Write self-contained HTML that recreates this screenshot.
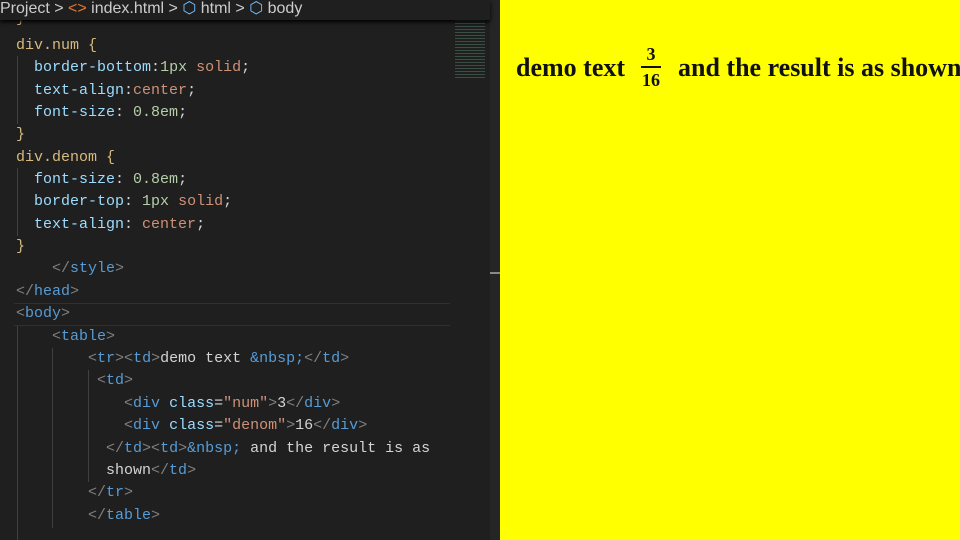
<!DOCTYPE html>
<html><head><style>
body{margin:0;width:960px;height:540px;overflow:hidden;background:#1e1e1e;position:relative;font-family:"Liberation Mono",monospace}
#ed{position:absolute;left:0;top:0;width:490px;height:540px;background:#1f1f1f}
#bc{position:absolute;left:0;top:0;width:490px;height:20px;font-family:"Liberation Sans",sans-serif;font-size:16px;color:#ccc;line-height:17px;white-space:nowrap;box-shadow:0 2px 4px #000;background:#1f1f1f;z-index:2}
.l{position:absolute;left:16px;font-size:15px;line-height:22px;white-space:pre;color:#d4d4d4}
.y{color:#d7ba7d}.b{color:#9cdcfe}.o{color:#ce9178}.g{color:#b5cea8}.t{color:#569cd6}.p{color:#808080}.w{color:#d4d4d4}.a{color:#9cdcfe}
.gd{position:absolute;width:1px;background:#404040}
#sb{position:absolute;left:490px;top:0;width:10px;height:540px;background:#252526}
#yl{position:absolute;left:500px;top:0;width:460px;height:540px;background:#ffff00}
.s{position:absolute;font-family:"Liberation Serif",serif;font-weight:bold;color:#111;white-space:nowrap}
</style></head><body>
<div id="ed">
<div id="bc">Project &gt; <span style="color:#e37933">&lt;&gt;</span> index.html &gt; <span style="color:#75beff">⬡</span> html &gt; <span style="color:#75beff">⬡</span> body</div>
<div class="gd" style="left:17px;top:56px;height:68px"></div>
<div class="gd" style="left:17px;top:168px;height:68px"></div>
<div class="gd" style="left:17px;top:325px;height:215px"></div>
<div class="gd" style="left:52px;top:348px;height:180px"></div>
<div class="gd" style="left:88px;top:370px;height:112px"></div>
<div style="position:absolute;left:14px;top:303px;width:436px;height:1px;background:#303030"></div>
<div style="position:absolute;left:14px;top:325px;width:436px;height:1px;background:#303030"></div>
<div class="l y" style="top:8px">}</div>
<div class="l y" style="top:35px">div.num {</div>
<div class="l" style="top:57px">  <span class="b">border-bottom</span>:<span class="g">1px</span> <span class="o">solid</span>;</div>
<div class="l" style="top:80px">  <span class="b">text-align</span>:<span class="o">center</span>;</div>
<div class="l" style="top:102px">  <span class="b">font-size</span>: <span class="g">0.8em</span>;</div>
<div class="l y" style="top:124px">}</div>
<div class="l y" style="top:147px">div.denom {</div>
<div class="l" style="top:169px">  <span class="b">font-size</span>: <span class="g">0.8em</span>;</div>
<div class="l" style="top:191px">  <span class="b">border-top</span>: <span class="g">1px</span> <span class="o">solid</span>;</div>
<div class="l" style="top:214px">  <span class="b">text-align</span>: <span class="o">center</span>;</div>
<div class="l y" style="top:236px">}</div>
<div class="l" style="top:258px">    <span class="p">&lt;/</span><span class="t">style</span><span class="p">&gt;</span></div>
<div class="l" style="top:281px"><span class="p">&lt;/</span><span class="t">head</span><span class="p">&gt;</span></div>
<div class="l" style="top:303px"><span class="p">&lt;</span><span class="t">body</span><span class="p">&gt;</span></div>
<div class="l" style="top:326px">    <span class="p">&lt;</span><span class="t">table</span><span class="p">&gt;</span></div>
<div class="l" style="top:348px">        <span class="p">&lt;</span><span class="t">tr</span><span class="p">&gt;&lt;</span><span class="t">td</span><span class="p">&gt;</span>demo text <span class="t">&amp;nbsp;</span><span class="p">&lt;/</span><span class="t">td</span><span class="p">&gt;</span></div>
<div class="l" style="top:370px">         <span class="p">&lt;</span><span class="t">td</span><span class="p">&gt;</span></div>
<div class="l" style="top:393px">            <span class="p">&lt;</span><span class="t">div</span> <span class="a">class</span>=<span class="o">"num"</span><span class="p">&gt;</span>3<span class="p">&lt;/</span><span class="t">div</span><span class="p">&gt;</span></div>
<div class="l" style="top:415px">            <span class="p">&lt;</span><span class="t">div</span> <span class="a">class</span>=<span class="o">"denom"</span><span class="p">&gt;</span>16<span class="p">&lt;/</span><span class="t">div</span><span class="p">&gt;</span></div>
<div class="l" style="top:438px">          <span class="p">&lt;/</span><span class="t">td</span><span class="p">&gt;&lt;</span><span class="t">td</span><span class="p">&gt;</span><span class="t">&amp;nbsp;</span> and the result is as</div>
<div class="l" style="top:460px">          shown<span class="p">&lt;/</span><span class="t">td</span><span class="p">&gt;</span></div>
<div class="l" style="top:482px">        <span class="p">&lt;/</span><span class="t">tr</span><span class="p">&gt;</span></div>
<div class="l" style="top:505px">        <span class="p">&lt;/</span><span class="t">table</span><span class="p">&gt;</span></div>
<div style="position:absolute;left:455px;top:20px;width:30px;height:60px;opacity:.35;background:repeating-linear-gradient(#6a8 0 1px,transparent 1px 3px)"></div>
</div>
<div id="sb"><div style="position:absolute;left:0;top:272px;width:10px;height:2px;background:#888"></div></div>
<div id="yl"></div>
<div class="s" style="left:516px;top:53px;font-size:26px;line-height:30px">demo text</div>
<div class="s" style="left:641px;top:44px;width:20px;text-align:center;font-size:18px;line-height:20px">3</div>
<div style="position:absolute;left:641px;top:66px;width:20px;height:2px;background:#111"></div>
<div class="s" style="left:639px;top:70px;width:24px;text-align:center;font-size:18px;line-height:20px">16</div>
<div class="s" style="left:678px;top:53px;font-size:26px;line-height:30px">and the result is as shown</div>
</body></html>
